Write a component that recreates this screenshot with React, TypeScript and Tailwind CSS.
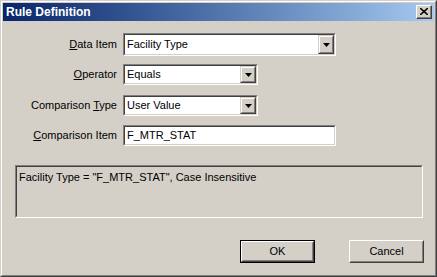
import React from "react";

const font = { fontFamily: '"Liberation Sans", Arial, sans-serif' };

function Sunken({ className = "", children }: { className?: string; children?: React.ReactNode }) {
  return (
    <div className={`border border-t-[#808080] border-l-[#808080] border-b-white border-r-white ${className}`}>
      <div className="h-full w-full border border-t-[#404040] border-l-[#404040] border-b-[#d4d0c8] border-r-[#d4d0c8] flex items-center">
        {children}
      </div>
    </div>
  );
}

function Arrow() {
  return (
    <svg width="7" height="4" viewBox="0 0 7 4">
      <polygon points="0,0 7,0 3.5,4" fill="#000" />
    </svg>
  );
}

function DropButton() {
  return (
    <div className="h-full w-[16px] border border-t-[#d4d0c8] border-l-[#d4d0c8] border-b-[#404040] border-r-[#404040] bg-[#d4d0c8]">
      <div className="h-full w-full border border-t-white border-l-white border-b-[#808080] border-r-[#808080] flex items-center justify-center">
        <Arrow />
      </div>
    </div>
  );
}

function Combo({ value, width, height }: { value: string; width: string; height: string }) {
  return (
    <Sunken className={`${width} ${height} bg-white`}>
      <span className="flex-1 pl-[2px] text-[11px] text-black leading-none">{value}</span>
      <DropButton />
    </Sunken>
  );
}

function Label({ children }: { children: React.ReactNode }) {
  return <div className="w-[114px] text-right text-[11px] text-black leading-none">{children}</div>;
}

function Button({ label, isDefault }: { label: string; isDefault?: boolean }) {
  const inner = (
    <div className="h-full w-full border border-t-white border-l-white border-b-[#404040] border-r-[#404040]">
      <div className="h-full w-full border border-t-[#d4d0c8] border-l-[#d4d0c8] border-b-[#808080] border-r-[#808080] flex items-center justify-center text-[11px] text-black">
        {label}
      </div>
    </div>
  );
  return (
    <div className={`w-[75px] h-[23px] bg-[#d4d0c8] ${isDefault ? "border border-black" : ""}`}>
      {inner}
    </div>
  );
}

export default function App() {
  return (
    <div style={font} className="w-[437px] h-[277px] border border-t-[#d4d0c8] border-l-[#d4d0c8] border-b-[#404040] border-r-[#404040] bg-[#d4d0c8]">
      <div className="h-full w-full border border-t-white border-l-white border-b-[#808080] border-r-[#808080] p-px flex flex-col">
        <div className="h-[18px] flex items-center justify-between bg-gradient-to-r from-[#0a246a] to-[#a6caf0] pl-[3px] pr-[2px]">
          <span className="text-white font-bold text-[12px] leading-none">Rule Definition</span>
          <div className="w-[16px] h-[14px] border border-t-white border-l-white border-b-[#404040] border-r-[#404040] bg-[#d4d0c8]">
            <div className="h-full w-full border-b border-r border-b-[#808080] border-r-[#808080] flex items-center justify-center">
              <svg width="8" height="7" viewBox="0 0 8 7">
                <path d="M0 0 L8 7 M8 0 L0 7" stroke="#000" strokeWidth="1.6" />
              </svg>
            </div>
          </div>
        </div>

        <div className="flex items-center mt-[12px]">
          <Label>
            <u className="underline-offset-1">D</u>ata Item
          </Label>
          <div className="ml-[6px]">
            <Combo value="Facility Type" width="w-[213px]" height="h-[23px]" />
          </div>
        </div>

        <div className="flex items-center mt-[8px]">
          <Label>
            <u className="underline-offset-1">O</u>perator
          </Label>
          <div className="ml-[6px]">
            <Combo value="Equals" width="w-[135px]" height="h-[21px]" />
          </div>
        </div>

        <div className="flex items-center mt-[10px]">
          <Label>
            Comparison <u className="underline-offset-1">T</u>ype
          </Label>
          <div className="ml-[6px]">
            <Combo value="User Value" width="w-[135px]" height="h-[21px]" />
          </div>
        </div>

        <div className="flex items-center mt-[9px]">
          <Label>
            <u className="underline-offset-1">C</u>omparison Item
          </Label>
          <div className="ml-[6px]">
            <Sunken className="w-[213px] h-[21px] bg-white">
              <span className="pl-[2px] text-[11px] text-black leading-none">F_MTR_STAT</span>
            </Sunken>
          </div>
        </div>

        <div className="ml-[12px] mt-[19px] w-[408px] h-[53px] border border-t-[#808080] border-l-[#808080] border-b-white border-r-white">
          <div className="h-full w-full border border-t-[#404040] border-l-[#404040] border-b-[#d4d0c8] border-r-[#d4d0c8] pl-[2px] pt-[3px] text-[11px] text-black leading-[14px]">
            Facility Type = "F_MTR_STAT", Case Insensitive
          </div>
        </div>

        <div className="flex justify-end gap-[34px] mt-[22px] pr-[10px]">
          <Button label="OK" isDefault />
          <Button label="Cancel" />
        </div>
      </div>
    </div>
  );
}
